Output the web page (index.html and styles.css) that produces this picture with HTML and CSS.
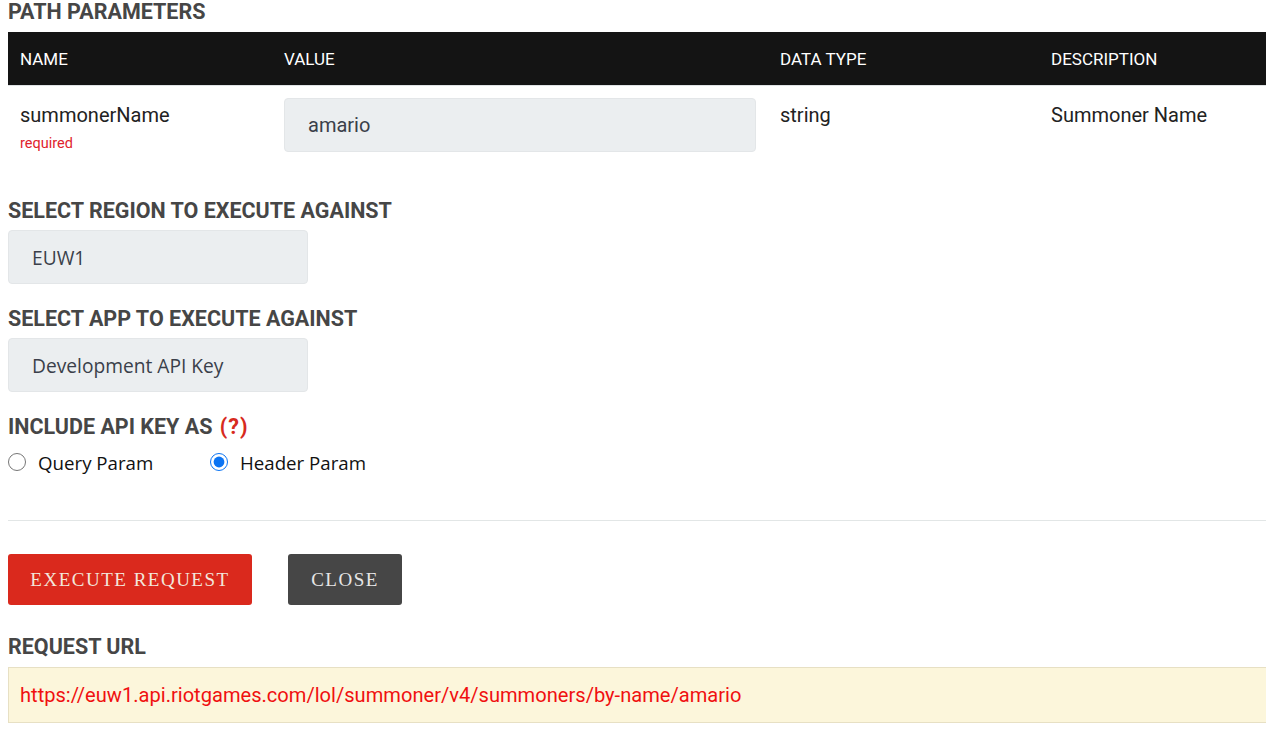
FILE: index.html
```html
<!DOCTYPE html>
<html lang="en">
<head>
<meta charset="utf-8">
<title>Execute Request</title>
<link rel="stylesheet" href="styles.css">
</head>
<body>
<div class="page">
  <h3 class="heading first">PATH PARAMETERS</h3>
  <table class="params">
    <thead>
      <tr>
        <th class="c-name">NAME</th>
        <th class="c-value">VALUE</th>
        <th class="c-type">DATA TYPE</th>
        <th class="c-desc">DESCRIPTION</th>
      </tr>
    </thead>
    <tbody>
      <tr>
        <td class="c-name">
          <div class="pname">summonerName</div>
          <div class="req">required</div>
        </td>
        <td class="c-value"><div class="field wide">amario</div></td>
        <td class="c-type">string</td>
        <td class="c-desc">Summoner Name</td>
      </tr>
    </tbody>
  </table>

  <h3 class="heading region">SELECT REGION TO EXECUTE AGAINST</h3>
  <div class="field select">EUW1</div>

  <h3 class="heading app">SELECT APP TO EXECUTE AGAINST</h3>
  <div class="field select">Development API Key</div>

  <h3 class="heading app">INCLUDE API KEY AS <span class="help">(?)</span></h3>
  <div class="radios">
    <label class="radio"><input type="radio" name="keyas"> <span>Query Param</span></label>
    <label class="radio"><input type="radio" name="keyas" checked> <span>Header Param</span></label>
  </div>

  <hr class="sep">

  <div class="buttons">
    <button class="btn exec">EXECUTE REQUEST</button>
    <button class="btn close">CLOSE</button>
  </div>

  <h3 class="heading url-h">REQUEST URL</h3>
  <div class="url">https://euw1.api.riotgames.com/lol/summoner/v4/summoners/by-name/amario</div>
</div>
</body>
</html>
```

FILE: styles.css
```css
html, body {
  margin: 0;
  padding: 0;
  background: #ffffff;
}
body {
  font-family: Roboto, "Liberation Sans", sans-serif;
  color: #222;
  overflow: hidden;
}
.page {
  padding-left: 8px;
}
.heading {
  margin: 0;
  font-family: Roboto, "Liberation Sans", sans-serif;
  font-weight: 700;
  font-size: 21.5px;
  line-height: 24px;
  color: #464646;
}
.help {
  color: #d72a20;
  margin-left: 2px;
  letter-spacing: 1px;
}
.params {
  margin-top: 8px;
  width: 1258px;
  border-collapse: collapse;
  table-layout: fixed;
}
.params th {
  background: #141414;
  color: #fff;
  font-weight: 400;
  font-size: 17px;
  text-align: left;
  height: 53px;
  padding: 0 12px;
  border-bottom: 1px solid #dfe3e5;
}
.params td {
  vertical-align: top;
  padding: 12px;
  font-size: 20px;
  line-height: 22px;
  color: #222;
}
.c-name { width: 240px; }
.c-value { width: 472px; }
.c-type { width: 247px; }
.params td.c-type, .params td.c-desc, .params td.c-name { padding-top: 18px; }
.params td.c-name { padding-bottom: 0; }
.req {
  color: #e0222c;
  font-size: 14.5px;
  line-height: 18px;
  margin-top: 9px;
}
.field {
  background: #ebeef0;
  border: 1px solid #e3e6e8;
  border-radius: 4px;
  box-sizing: border-box;
  height: 54px;
  display: flex;
  align-items: center;
  padding-left: 23px;
  font-family: "Open Sans", Roboto, sans-serif;
  font-size: 19.2px;
  color: #3a3f4a;
}
.field.wide {
  width: 472px;
  font-family: Roboto, sans-serif;
  font-size: 20px;
}
.field.select {
  width: 300px;
  margin-top: 7px;
}
.heading.region {
  margin-top: 35px;
}
.heading.app {
  margin-top: 23px;
}
.radios {
  display: flex;
  align-items: center;
  height: 24px;
  margin-top: 11px;
  font-family: "Open Sans", Roboto, sans-serif;
  font-size: 18.7px;
  color: #111;
}
.radio {
  display: flex;
  align-items: center;
}
.radio:first-child {
  width: 202px;
}
.radio input {
  width: 18px;
  height: 18px;
  margin: 0 12px 0 0;
  accent-color: #0b74f3;
}
.sep {
  margin: 46px 0 0 0;
  border: 0;
  border-top: 1px solid #e2e6e6;
  height: 0;
}
.buttons {
  display: flex;
  margin-top: 33px;
  gap: 36px;
}
.btn {
  height: 51px;
  border: 0;
  border-radius: 3px;
  font-family: "Liberation Serif", "DejaVu Serif", serif;
  font-size: 19px;
  letter-spacing: 1.5px;
  color: #f2e6dc;
  padding: 0;
  white-space: nowrap;
  cursor: pointer;
}
.btn.exec {
  background: #da291d;
  width: 244px;
}
.btn.close {
  background: #464646;
  width: 114px;
  color: #e6e6e6;
}
.heading.url-h {
  margin-top: 30px;
}
.url {
  margin-top: 8px;
  height: 56px;
  box-sizing: border-box;
  background: #fcf6db;
  border: 1px solid #e7e0c4;
  border-right: 0;
  display: flex;
  align-items: center;
  padding-left: 11px;
  font-size: 20.1px;
  color: #f01010;
  font-family: Roboto, sans-serif;
}
```
